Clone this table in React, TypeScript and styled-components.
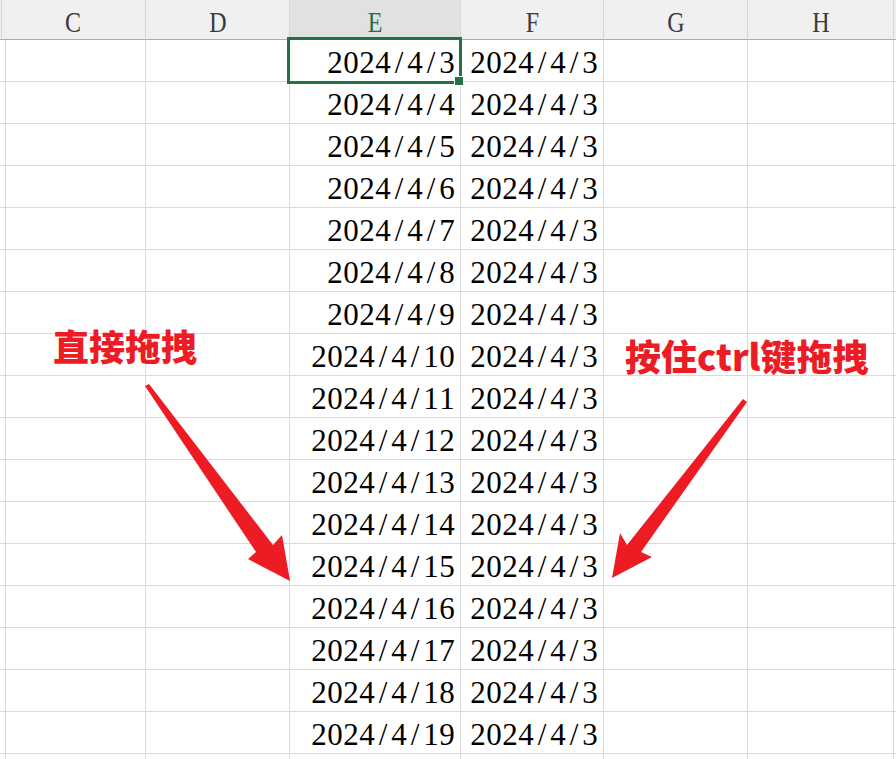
import React from "react";
import styled, { createGlobalStyle } from "styled-components";

const GlobalStyle = createGlobalStyle`
  html, body { margin: 0; padding: 0; background: #ffffff; }
  body { overflow: hidden; }
  * { box-sizing: border-box; }
`;

const Page = styled.div`
  position: relative;
  width: 896px;
  height: 759px;
  overflow: hidden;
  background: #ffffff;
`;

const Sheet = styled.div`
  display: grid;
  grid-template-columns: 2px 144px 144px 171px 143px 144px 146px 1fr;
  grid-template-rows: 40px;
  grid-auto-rows: 42px;
`;

const HeaderCell = styled.div<{ $active?: boolean }>`
  background: ${(p) => (p.$active ? "#e1e1e1" : "#f0f0f0")};
  border-right: 1px solid #d6d6d6;
  border-bottom: 1px solid #ababab;
  display: flex;
  justify-content: center;
  align-items: flex-start;
  padding-top: 7px;
  font-family: "Liberation Serif", "DejaVu Serif", serif;
  font-size: 30px;
  line-height: 30px;
  color: ${(p) => (p.$active ? "#217346" : "#3a3a3a")};
`;

const HeaderLetter = styled.span`
  display: inline-block;
  transform: scaleX(0.8);
`;

const Cell = styled.div`
  border-right: 1px solid #dadada;
  border-bottom: 1px solid #dadada;
  display: flex;
  justify-content: flex-end;
  align-items: flex-start;
  padding-top: 7px;
  padding-right: 5px;
  font-family: "Liberation Serif", "DejaVu Serif", serif;
  font-size: 31px;
  line-height: 31px;
  color: #000000;
  white-space: nowrap;
`;

const Glyph = styled.span`
  display: inline-block;
  width: 16px;
  text-align: center;
`;

const Selection = styled.div`
  position: absolute;
  left: 287px;
  top: 37px;
  width: 175px;
  height: 47px;
  border: 3px solid #217346;
  pointer-events: none;
`;

const Handle = styled.div`
  position: absolute;
  left: 454px;
  top: 76px;
  width: 10px;
  height: 10px;
  background: #217346;
  border: 1px solid #ffffff;
`;

const Overlay = styled.svg`
  position: absolute;
  left: 0;
  top: 0;
  width: 896px;
  height: 759px;
  pointer-events: none;
`;

const Label = styled.div<{ $left: number; $top: number }>`
  position: absolute;
  left: ${(p) => p.$left}px;
  top: ${(p) => p.$top}px;
  font-family: "Noto Sans CJK SC", "Noto Sans", sans-serif;
  font-weight: 900;
  font-size: 36px;
  line-height: 36px;
  color: #ed1c24;
  white-space: nowrap;
`;

const columns = ["", "C", "D", "E", "F", "G", "H", ""];

const DateText: React.FC<{ text: string }> = ({ text }) => (
  <>
    {text.split("").map((ch, i) => (
      <Glyph key={i}>{ch}</Glyph>
    ))}
  </>
);

export default function App() {
  const rows = Array.from({ length: 17 }, (_, i) => ({
    e: `2024/4/${i + 3}`,
    f: "2024/4/3",
  }));

  return (
    <Page>
      <GlobalStyle />
      <Sheet>
        {columns.map((c, i) => (
          <HeaderCell key={`h${i}`} $active={c === "E"}>
            <HeaderLetter>{c}</HeaderLetter>
          </HeaderCell>
        ))}
        {rows.map((r, ri) => (
          <React.Fragment key={ri}>
            <Cell />
            <Cell />
            <Cell />
            <Cell>
              <DateText text={r.e} />
            </Cell>
            <Cell>
              <DateText text={r.f} />
            </Cell>
            <Cell />
            <Cell />
            <Cell />
          </React.Fragment>
        ))}
        {columns.map((_, i) => (
          <Cell key={`x${i}`} />
        ))}
      </Sheet>

      <Selection />
      <Handle />

      <Overlay viewBox="0 0 896 759">
        <polygon
          fill="#ed1c24"
          points="145,386 149,384 273,545 282,535 290,581 248,559 256,552"
        />
        <polygon
          fill="#ed1c24"
          points="747,402 743,399 627,545 620,533 612,578 652,557 641,552"
        />
      </Overlay>

      <Label $left={53} $top={327}>直接拖拽</Label>
      <Label $left={625} $top={337}>按住ctrl键拖拽</Label>
    </Page>
  );
}
